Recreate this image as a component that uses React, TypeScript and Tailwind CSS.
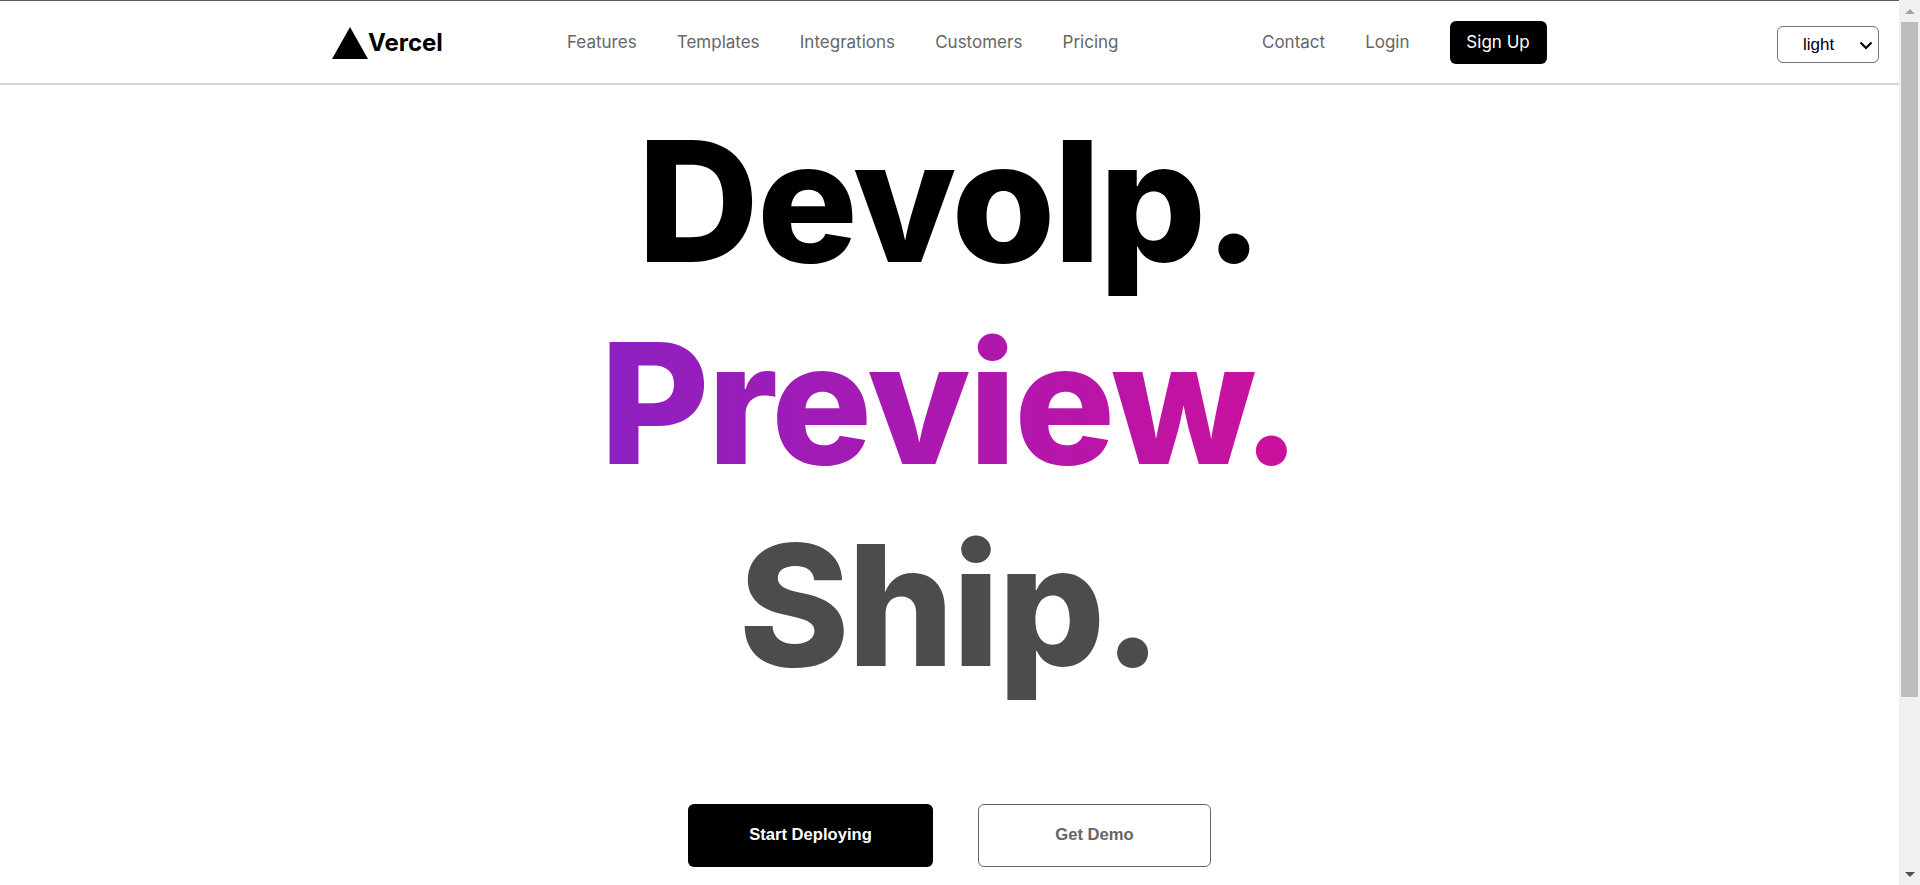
const navLinks = ['Features', 'Templates', 'Integrations', 'Customers', 'Pricing'];

export default function App() {
  return (
    <div className="flex h-[885px] overflow-hidden bg-white font-['Inter',sans-serif]">
      <div className="flex-1 min-w-0">
        <div className="h-px bg-[#5a5a5a]" />
        <nav className="flex h-[84px] items-center border-b-2 border-[#d4d4d4] pl-[332px] pt-[1px]">
          <a className="flex w-[235px] items-center">
            <svg width="36" height="32" viewBox="0 0 36 32">
              <polygon points="18,0 36,32 0,32" fill="#000" />
            </svg>
            <span className="text-2xl font-bold leading-8 text-black">Vercel</span>
          </a>
          <ul className="flex w-[695px] gap-[40.2px]">
            {navLinks.map((l) => (
              <li key={l} className="text-[17px] text-[#666666]">{l}</li>
            ))}
          </ul>
          <div className="flex items-center gap-10">
            <span className="text-[17px] text-[#666666]">Contact</span>
            <span className="text-[17px] text-[#666666]">Login</span>
            <button className="h-[43px] w-[97px] rounded-md bg-black text-[17px] text-white">Sign Up</button>
          </div>
          <div className="ml-auto mr-[20px] mt-[4px] flex h-[37px] w-[102px] items-center rounded-md border border-[#767676] pl-[25px] font-['Liberation_Sans',sans-serif] text-[17px] text-black">
            light
            <svg className="ml-auto mr-[5px]" width="14" height="14" viewBox="0 0 14 14" fill="none">
              <path d="M1.500 4.500l5.500 5.500 5.500-5.500" stroke="#000" strokeWidth="2.200" />
            </svg>
          </div>
        </nav>
        <main className="flex flex-col items-center pt-[15px]">
          <h1 className="text-center text-[168px] font-extrabold leading-[202px] tracking-[-2px]">
            <span className="block text-black">Devolp.</span>
            <span className="block bg-linear-to-r/srgb from-[#8c21c2] to-[#cc109c] bg-clip-text text-transparent">Preview.</span>
            <span className="block text-[#4c4c4c]">Ship.</span>
          </h1>
          <div className="mt-[98px] flex gap-[45px] font-['Liberation_Sans',sans-serif] text-[16.6px] font-bold">
            <button className="h-[63px] w-[245px] rounded-md bg-black text-white">Start Deploying</button>
            <button className="h-[63px] w-[233px] rounded-md border border-[#666666] bg-white text-[#666666]">Get Demo</button>
          </div>
        </main>
      </div>
      {/* fake scrollbar from the screenshot */}
      <aside className="flex w-[21px] shrink-0 flex-col items-center bg-[#f1f1f1]">
        <div className="flex h-[22px] w-full items-center justify-center">
          <div className="h-0 w-0 border-x-[5px] border-b-[5px] border-x-transparent border-b-[#a3a3a3]" />
        </div>
        <div className="h-[675px] w-[17px] bg-[#bdbdbd]" />
        <div className="mt-auto flex h-[22px] w-full items-center justify-center">
          <div className="h-0 w-0 border-x-[5px] border-t-[5px] border-x-transparent border-t-[#505050]" />
        </div>
      </aside>
    </div>
  );
}
